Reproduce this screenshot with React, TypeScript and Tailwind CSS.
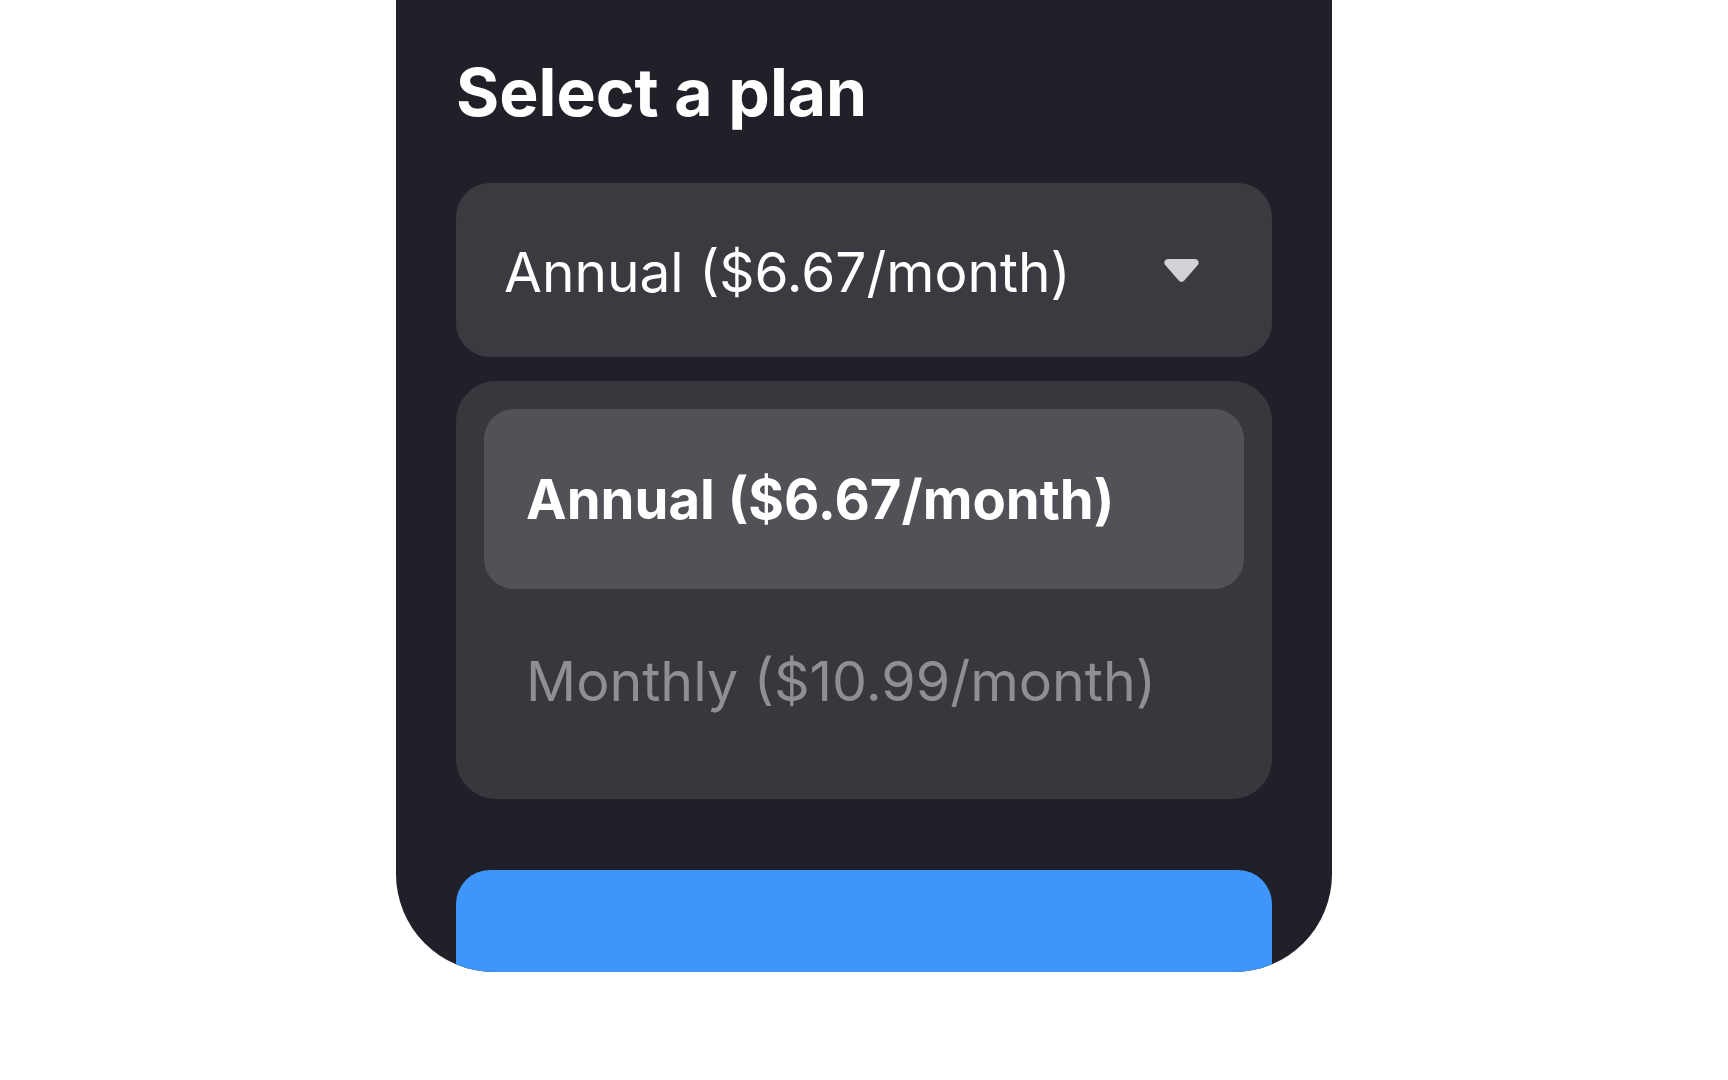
import React from 'react';

const plans = [
  { id: 'annual', label: 'Annual ($6.67/month)' },
  { id: 'monthly', label: 'Monthly ($10.99/month)' },
];

function Caret() {
  return (
    <svg width="35" height="23" viewBox="0 0 35 23" aria-hidden="true">
      <path
        d="M4 0H31a3.6 3.6 0 0 1 2.8 5.9L20.3 21.6a3.6 3.6 0 0 1-5.6 0L1.2 5.9A3.6 3.6 0 0 1 4 0Z"
        fill="#d1d1d6"
      />
    </svg>
  );
}

export default function App() {
  const selected = 'annual';

  return (
    <div
      className="min-h-screen bg-white flex justify-center"
      style={{ fontFamily: 'Inter, "Noto Sans", sans-serif' }}
    >
      <div className="w-[936px] h-[972px] bg-[#1f2028] rounded-b-[98px] overflow-hidden px-[60px] pt-[59px] flex flex-col">
        <h1 className="text-[66px] leading-none font-bold text-white">
          Select a plan
        </h1>

        <button className="mt-[58px] h-[174px] shrink-0 rounded-[34px] bg-[#3a3a41] flex items-center justify-between pl-[48px] pr-[73px]">
          <span className="text-[55px] leading-none text-white pt-[4px]">
            Annual ($6.67/month)
          </span>
          <Caret />
        </button>

        <div className="mt-[24px] shrink-0 rounded-[40px] bg-[#37373e] p-[28px] flex flex-col gap-[2px]">
          {plans.map((plan) => (
            <div
              key={plan.id}
              className={`h-[180px] rounded-[30px] flex items-center pl-[42px] ${
                plan.id === selected ? 'bg-[#515158]' : ''
              }`}
            >
              <span
                className={`leading-none ${
                  plan.id === selected
                    ? 'text-[54.5px] font-bold text-white'
                    : 'text-[55.5px] text-[#8e8e93]'
                }`}
              >
                {plan.label}
              </span>
            </div>
          ))}
        </div>

        <div className="mt-[71px] h-[160px] shrink-0 rounded-[34px] bg-[#3e96fd]" />
      </div>
    </div>
  );
}
